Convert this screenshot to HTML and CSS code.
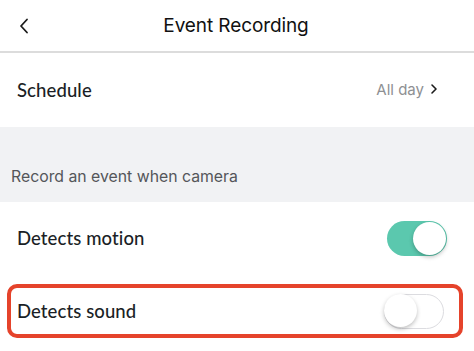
FILE: index.html
```html
<!DOCTYPE html>
<html>
<head>
<meta charset="utf-8">
<link rel="stylesheet" href="styles.css">
</head>
<body>
<div class="screen">
  <header class="topbar">
    <span class="back">
      <svg width="10" height="16" viewBox="0 0 10 16"><path d="M8 1.5 L2 8 L8 14.5" fill="none" stroke="#1a1a1a" stroke-width="1.8" stroke-linecap="round" stroke-linejoin="round"/></svg>
    </span>
    <h1 class="title">Event Recording</h1>
  </header>
  <div class="row schedule">
    <span class="label">Schedule</span>
    <span class="value">All day
      <svg width="8" height="12" viewBox="0 0 8 12"><path d="M2 2 L6 6 L2 10" fill="none" stroke="#1a1a1a" stroke-width="1.6" stroke-linecap="round" stroke-linejoin="round"/></svg>
    </span>
  </div>
  <div class="section">
    <span class="section-text">Record an event when camera</span>
  </div>
  <div class="row motion">
    <span class="label">Detects motion</span>
    <span class="toggle on"><span class="knob"></span></span>
  </div>
  <div class="highlight">
    <div class="row sound">
      <span class="label">Detects sound</span>
      <span class="toggle off"><span class="knob"></span></span>
    </div>
  </div>
</div>
</body>
</html>
```
FILE: styles.css
```css
html, body {
  margin: 0;
  padding: 0;
  background: #ffffff;
}
.screen {
  width: 474px;
  height: 351px;
  overflow: hidden;
  background: #ffffff;
  display: flex;
  flex-direction: column;
}
.topbar {
  height: 51px;
  border-bottom: 2px solid #dcdcdc;
  display: flex;
  align-items: center;
  justify-content: center;
  position: relative;
  flex-shrink: 0;
}
.back {
  position: absolute;
  left: 19px;
  top: 18px;
  display: flex;
}
.title {
  margin: 0 0 0 -2px;
  font-family: "Inter", "Liberation Sans", sans-serif;
  font-weight: 400;
  font-size: 19px;
  color: #111111;
  letter-spacing: -0.1px;
}
.row {
  display: flex;
  align-items: center;
  justify-content: space-between;
}
.label {
  font-family: "Lato", "Liberation Sans", sans-serif;
  font-size: 18.5px;
  font-weight: 500;
  color: #1b1f26;
  letter-spacing: 0.1px;
}
.schedule {
  height: 74px;
  padding: 0 36px 0 17px;
}
.value {
  font-family: "Inter", "Liberation Sans", sans-serif;
  font-size: 15px;
  color: #8e9093;
  display: flex;
  align-items: center;
  gap: 6px;
  padding-bottom: 2px;
  padding-left: 2px;
}
.section {
  height: 75px;
  background: #f1f2f4;
  display: flex;
  align-items: flex-end;
  padding-left: 11px;
  box-sizing: border-box;
  padding-bottom: 16px;
  flex-shrink: 0;
}
.section-text {
  font-family: "Inter", "Liberation Sans", sans-serif;
  font-size: 15.8px;
  color: #54565a;
}
.motion {
  height: 72px;
  padding: 0 27px 0 17px;
  flex-shrink: 0;
}
.highlight {
  margin: 10px 11px 0 7px;
  border: 4px solid #e5432b;
  border-radius: 10px;
  flex-shrink: 0;
}
.sound {
  height: 46px;
  padding: 0 15px 0 6px;
}
.toggle {
  width: 60px;
  height: 35px;
  border-radius: 18px;
  position: relative;
  box-sizing: border-box;
}
.toggle.on {
  background: #5bc8ae;
}
.toggle.off {
  background: #ffffff;
  border: 1.5px solid #dcdce0;
}
.knob {
  position: absolute;
  width: 33px;
  height: 33px;
  border-radius: 50%;
  background: #ffffff;
  top: 1px;
  box-shadow: 0 2px 4px rgba(0,0,0,0.25);
}
.toggle.on .knob {
  right: 1px;
}
.toggle.off .knob {
  left: -1px;
  top: -0.5px;
}
```
